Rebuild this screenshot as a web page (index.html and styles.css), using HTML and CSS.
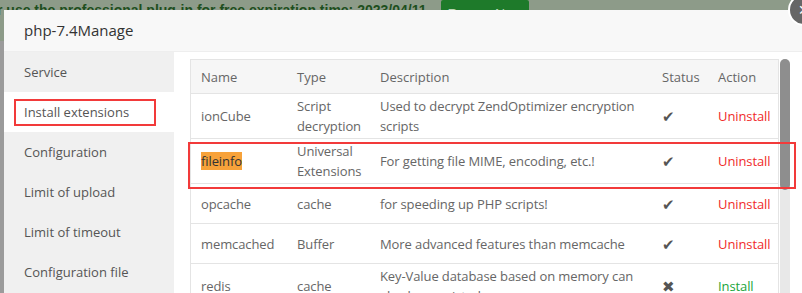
FILE: index.html
```html
<!DOCTYPE html>
<html lang="en">
<head>
    <meta charset="UTF-8">
    <title>php-7.4Manage</title>
    <link rel="stylesheet" href="styles.css">
</head>
<body>
    <div class="notice">
        <span class="notice-text">r use the professional plug-in for free expiration time: 2023/04/11</span>
        <span class="renew">Renew Now</span>
    </div>

    <div class="dialog">
        <div class="dialog-title">php-7.4Manage</div>
        <span class="dialog-close">&#x2715;</span>
        <div class="dialog-body">
            <ul class="side-menu">
                <li>Service</li>
                <li class="active"><span class="mark">Install extensions</span></li>
                <li>Configuration</li>
                <li>Limit of upload</li>
                <li>Limit of timeout</li>
                <li>Configuration file</li>
            </ul>
            <div class="content">
                <div class="table-wrap">
                    <table class="ext-table">
                        <thead>
                            <tr>
                                <th class="col-name">Name</th>
                                <th class="col-type">Type</th>
                                <th class="col-desc">Description</th>
                                <th class="col-status">Status</th>
                                <th class="col-action">Action</th>
                            </tr>
                        </thead>
                        <tbody>
                            <tr>
                                <td>ionCube</td>
                                <td>Script decryption</td>
                                <td>Used to decrypt ZendOptimizer encryption scripts</td>
                                <td class="status">&#x2714;</td>
                                <td><a class="uninstall">Uninstall</a></td>
                            </tr>
                            <tr>
                                <td><span class="hl">fileinfo</span></td>
                                <td>Universal Extensions</td>
                                <td>For getting file MIME, encoding, etc.!</td>
                                <td class="status">&#x2714;</td>
                                <td><a class="uninstall">Uninstall</a></td>
                            </tr>
                            <tr>
                                <td>opcache</td>
                                <td>cache</td>
                                <td>for speeding up PHP scripts!</td>
                                <td class="status">&#x2714;</td>
                                <td><a class="uninstall">Uninstall</a></td>
                            </tr>
                            <tr>
                                <td>memcached</td>
                                <td>Buffer</td>
                                <td>More advanced features than memcache</td>
                                <td class="status">&#x2714;</td>
                                <td><a class="uninstall">Uninstall</a></td>
                            </tr>
                            <tr>
                                <td>redis</td>
                                <td>cache</td>
                                <td>Key-Value database based on memory can also be persisted</td>
                                <td class="status">&#x2716;</td>
                                <td><a class="install">Install</a></td>
                            </tr>
                        </tbody>
                    </table>
                    <div class="row-mark"></div>
                </div>
                <div class="scrollbar"><div class="thumb"></div></div>
            </div>
        </div>
    </div>
</body>
</html>
```

FILE: styles.css
```css
body {
    margin: 0;
    height: 293px;
    overflow: hidden;
    background-color: #9b9b9b;
    font-family: 'Open Sans', 'Noto Sans', sans-serif;
    position: relative;
}
.notice {
    background-color: #8d9b89;
    height: 40px;
    display: flex;
    align-items: flex-start;
    gap: 15px;
    padding-top: 1px;
    margin-left: -3px;
    white-space: nowrap;
}
.notice-text {
    font-family: 'Liberation Sans', sans-serif;
    font-weight: bold;
    font-size: 14px;
    line-height: 18px;
    color: #1e4f1e;
}
.renew {
    background-color: #1e7a2a;
    color: #b8d4b4;
    font-family: 'Liberation Sans', sans-serif;
    font-size: 14px;
    line-height: 20px;
    padding: 4px 6px;
    margin-top: -1px;
    border-radius: 2px;
}
.dialog {
    position: absolute;
    top: 10px;
    left: 4px;
    width: 820px;
    height: 300px;
    background-color: #fff;
}
.dialog-title {
    height: 41px;
    line-height: 41px;
    padding-left: 20px;
    font-size: 15px;
    color: #333;
    background-color: #f8f8f8;
    border-bottom: 1px solid #eee;
}
.dialog-close {
    position: absolute;
    top: -16px;
    left: 784px;
    width: 28px;
    height: 28px;
    border-radius: 50%;
    background-color: #666;
    border: 2px solid #fff;
    color: #fff;
    font-size: 14px;
    line-height: 28px;
    text-align: center;
}
.dialog-body {
    display: flex;
}
.side-menu {
    list-style: none;
    margin: 0;
    padding: 0;
    width: 170px;
    height: 260px;
    background-color: #f0f0f0;
}
.side-menu li {
    height: 40px;
    line-height: 40px;
    padding-left: 20px;
    font-size: 13px;
    color: #555;
}
.side-menu li.active {
    background-color: #fff;
    padding-left: 10px;
}
.mark {
    display: inline-block;
    height: 23px;
    line-height: 23px;
    width: 130px;
    padding-left: 8px;
    border: 2px solid #f23a3a;
    vertical-align: middle;
    margin-top: -3px;
}
.content {
    flex: 1;
    display: flex;
    padding: 7px 0 0 16px;
}
.table-wrap {
    position: relative;
    width: 589px;
    flex-shrink: 0;
}
.ext-table {
    width: 100%;
    table-layout: fixed;
    border-collapse: collapse;
    border: 1px solid #e4e4e4;
    font-size: 13px;
    color: #666;
}
.ext-table th {
    background-color: #f6f6f6;
    font-weight: normal;
    text-align: left;
    height: 33px;
    padding: 0 10px;
    border-bottom: 1px solid #e4e4e4;
}
.ext-table td {
    padding: 2px 10px;
    height: 35px;
    line-height: 20px;
    letter-spacing: -0.1px;
    border-bottom: 1px solid #e4e4e4;
}
.col-name { width: 76px; }
.col-type { width: 63px; }
.col-desc { width: 262px; }
.col-status { width: 36px; }
.ext-table td.status {
    color: #555;
    font-size: 15px;
    padding-left: 10px;
}
.uninstall { color: #f02a2a; }
.install { color: #20a53a; }
.hl {
    background-color: #f7a23a;
    color: #333;
}
.row-mark {
    position: absolute;
    left: -2px;
    top: 83px;
    width: 604px;
    height: 43px;
    border: 2px solid #f23a3a;
}
.scrollbar {
    width: 10px;
    height: 240px;
    margin-left: 1px;
    background-color: #e8e8e8;
    border-radius: 5px 5px 0 0;
}
.thumb {
    height: 131px;
    background-color: #8e8e8e;
    border-radius: 5px;
}
```
